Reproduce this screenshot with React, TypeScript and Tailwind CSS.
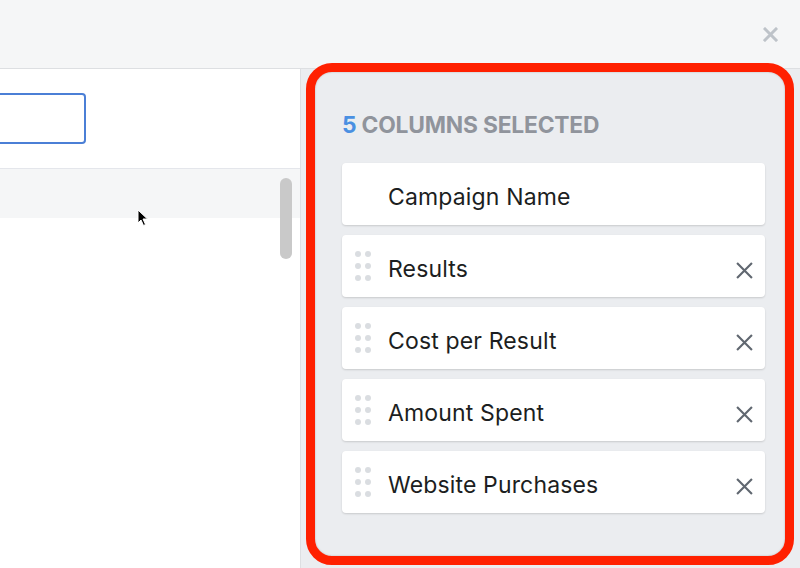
import React from "react";

const columns = [
  { name: "Campaign Name", locked: true },
  { name: "Results" },
  { name: "Cost per Result" },
  { name: "Amount Spent" },
  { name: "Website Purchases" },
];

function DragDots() {
  return (
    <div className="grid grid-cols-2 gap-x-[4px] gap-y-[6px] w-[16px]">
      {[0, 1, 2, 3, 4, 5].map((i) => (
        <span key={i} className="block w-[6px] h-[6px] rounded-full bg-[#dadde1]" />
      ))}
    </div>
  );
}

function CloseIcon({ size, stroke, color }: { size: number; stroke: number; color: string }) {
  return (
    <svg width={size} height={size} viewBox="0 0 16 16" fill="none">
      <path d="M1 1 L15 15 M15 1 L1 15" stroke={color} strokeWidth={stroke} strokeLinecap="butt" />
    </svg>
  );
}

function ColumnCard({ name, locked }: { name: string; locked?: boolean }) {
  return (
    <div className="h-[62px] bg-white rounded-[4px] shadow-[0_1px_2px_rgba(0,0,0,0.15)] flex items-center pl-[13px] pr-[12px]">
      <div className="w-[16px]">{!locked && <DragDots />}</div>
      <span className="ml-[17px] pt-[7px] flex-1 text-[23px] tracking-[0.15px] text-[#1c1e21]">{name}</span>
      {!locked && (
        <div className="pt-[8px]">
          <CloseIcon size={17} stroke={2} color="#606770" />
        </div>
      )}
    </div>
  );
}

export default function App() {
  return (
    <div
      className="relative w-[800px] h-[568px] overflow-hidden flex flex-col bg-white"
      style={{ fontFamily: "Inter, 'Liberation Sans', sans-serif" }}
    >
      {/* TOP BAR */}
      <div className="h-[69px] shrink-0 bg-[#f5f6f7] border-b border-[#dddfe2] flex items-center justify-end pr-[22px]">
        <CloseIcon size={15} stroke={3.2} color="#bec3c9" />
      </div>

      {/* BODY */}
      <div className="flex flex-1">
        {/* left list */}
        <div className="relative w-[301px] shrink-0 bg-white border-r border-[#dddfe2]">
          <div className="h-[100px] border-b border-[#e4e6eb] pt-[24px]">
            <div className="-ml-[12px] w-[98px] h-[51px] border-2 border-[#4b7fd6] rounded-[4px]" />
          </div>
          <div className="h-[49px] bg-[#f5f6f7]" />
          <div className="absolute left-[280px] top-[109px] w-[12px] h-[81px] rounded-full bg-[#c9c9c9]" />
          <svg className="absolute left-[137px] top-[140px]" width="12" height="18" viewBox="0 0 12 18">
            <path d="M1 1 L1 14 L4 11 L6.5 16.5 L8.5 15.5 L6 10 L10.5 10 Z" fill="#000" stroke="#fff" strokeWidth="1" />
          </svg>
        </div>

        {/* selected columns */}
        <div className="flex-1 bg-[#ebedf0] pl-[41px] pr-[35px] pt-[45px]">
          <div className="h-[23px] text-[22.8px] font-bold tracking-[-0.2px] leading-none text-[#90949c]">
            <span className="text-[#4a90e2]">5</span> COLUMNS SELECTED
          </div>
          <div className="mt-[26px] flex flex-col gap-[10px]">
            {columns.map((c) => (
              <ColumnCard key={c.name} name={c.name} locked={c.locked} />
            ))}
          </div>
        </div>
      </div>

      {/* red annotation overlay */}
      <div className="absolute left-[306px] top-[63px] w-[488px] h-[502px] border-[9px] border-[#ff2000] rounded-[26px] shadow-[inset_0_0_2px_rgba(0,0,0,0.25)] pointer-events-none" />
    </div>
  );
}
